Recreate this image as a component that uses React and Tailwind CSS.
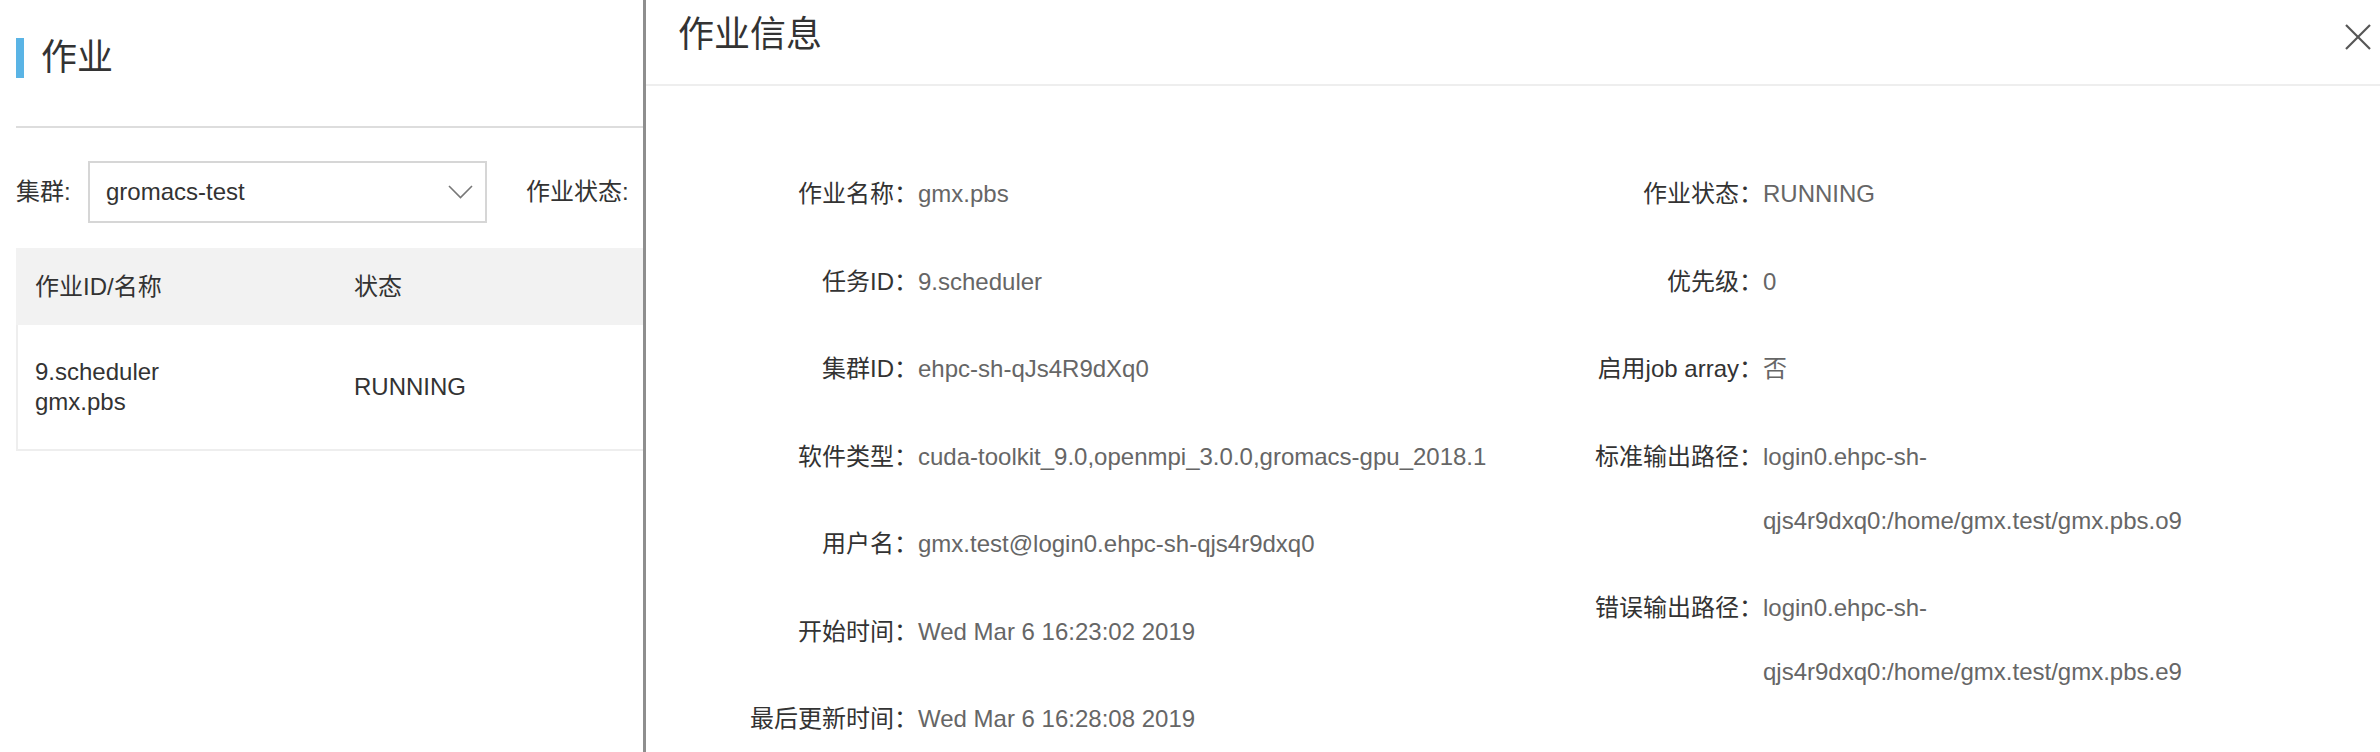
const leftRows = [
  ["作业名称", "gmx.pbs"],
  ["任务ID", "9.scheduler"],
  ["集群ID", "ehpc-sh-qJs4R9dXq0"],
  ["软件类型", "cuda-toolkit_9.0,openmpi_3.0.0,gromacs-gpu_2018.1"],
  ["用户名", "gmx.test@login0.ehpc-sh-qjs4r9dxq0"],
  ["开始时间", "Wed Mar 6 16:23:02 2019"],
  ["最后更新时间", "Wed Mar 6 16:28:08 2019"],
];

const rightRows = [
  ["作业状态", ["RUNNING"]],
  ["优先级", ["0"]],
  ["启用job array", ["否"]],
  ["标准输出路径", ["login0.ehpc-sh-", "qjs4r9dxq0:/home/gmx.test/gmx.pbs.o9"]],
  ["错误输出路径", ["login0.ehpc-sh-", "qjs4r9dxq0:/home/gmx.test/gmx.pbs.e9"]],
];

function InfoRow({ label, lines }) {
  return (
    <div className="flex mb-[23.5px] text-[24px] leading-[64px]">
      <div className="w-[251px] shrink-0 text-right text-[#333]">{label}：</div>
      <div className="text-[#666]">
        {lines.map((l, i) => (
          <div key={i}>{l}</div>
        ))}
      </div>
    </div>
  );
}

export default function App() {
  return (
    <div className="relative h-[752px] w-[2380px] overflow-hidden bg-white text-[#333] font-['Liberation_Sans','Noto_Sans_CJK_SC',sans-serif]">

      {/* page under the drawer */}
      <div className="pl-4 pt-[38px]">
        <div className="flex items-center h-10">
          <div className="w-2 h-10 bg-[#5ab4e5]" />
          <h1 className="ml-[17px] text-[36px] leading-none">作业</h1>
        </div>

        <div className="mt-[48px] h-[2px] bg-[#dddddd]" />

        <div className="mt-[33px] flex items-center h-[62px] text-[24px]">
          <span className="w-[72px]">集群:</span>
          <div className="w-[399px] h-[62px] border-2 border-[#d6d6d6] flex items-center justify-between pl-[16px] pr-[12px]">
            <span>gromacs-test</span>
            <svg width="25" height="14" viewBox="0 0 25 14" fill="none">
              <polyline points="1,1 12.5,12.5 24,1" stroke="#777" strokeWidth="1.6" />
            </svg>
          </div>
          <span className="ml-[39px]">作业状态:</span>
        </div>

        <div className="mt-[25px] text-[24px]">
          <div className="flex items-center h-[77px] bg-[#f2f2f2]">
            <div className="w-[338px] pl-[19px]">作业ID/名称</div>
            <div>状态</div>
          </div>
          <div className="flex items-center h-[126px] border-l-2 border-b-2 border-[#eeeeee]">
            <div className="w-[336px] pl-[17px] leading-[30px]">
              <div>9.scheduler</div>
              <div>gmx.pbs</div>
            </div>
            <div>RUNNING</div>
          </div>
        </div>
      </div>

      {/* drawer */}
      <div className="absolute top-0 right-0 bottom-0 left-[643px] bg-white border-l-[3px] border-[#8e8e8e]">
        <div className="h-[86px] border-b-2 border-[#eeeeee] flex items-center justify-between pl-[32px] pr-[9px] pb-[14px]">
          <h2 className="text-[36px] leading-none">作业信息</h2>
          <svg width="26" height="26" viewBox="0 0 26 26" fill="none" className="mt-[4px]">
            <line x1="1" y1="1" x2="25" y2="25" stroke="#555" strokeWidth="2.2" />
            <line x1="25" y1="1" x2="1" y2="25" stroke="#555" strokeWidth="2.2" />
          </svg>
        </div>

        <div className="grid grid-cols-[845px_1fr] pl-[21px] pt-[76px]">
          <div>
            {leftRows.map(([k, v]) => (
              <InfoRow key={k} label={k} lines={[v]} />
            ))}
          </div>
          <div>
            {rightRows.map(([k, v]) => (
              <InfoRow key={k} label={k} lines={v} />
            ))}
          </div>
        </div>
      </div>
    </div>
  );
}
